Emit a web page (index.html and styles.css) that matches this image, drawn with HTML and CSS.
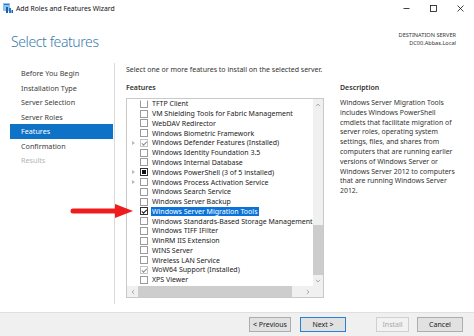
FILE: index.html
```html
<!DOCTYPE html>
<html lang="en">
<head>
    <meta charset="UTF-8">
    <title>Add Roles and Features Wizard</title>
    <link rel="stylesheet" href="styles.css">
</head>
<body>
    <div class="window">
        <div class="titlebar">
            <svg class="app-icon" viewBox="0 0 10 10">
                <rect x="0" y="0" width="7" height="8" fill="#8ec3ee"/>
                <rect x="1" y="1" width="5" height="1" fill="#2b78c5"/>
                <rect x="3" y="4" width="2" height="6" fill="#1b5fa8"/>
                <rect x="6" y="5" width="2" height="5" fill="#2b78c5"/>
                <rect x="8.5" y="7" width="1.5" height="3" fill="#1b5fa8"/>
            </svg>
            <span class="title">Add Roles and Features Wizard</span>
            <div class="controls">
                <span><svg viewBox="0 0 7 7"><line x1="0.5" y1="3.5" x2="6.5" y2="3.5" stroke="#111" stroke-width="0.8"/></svg></span>
                <span><svg viewBox="0 0 7 7"><rect x="0.5" y="0.5" width="6" height="6" fill="none" stroke="#111" stroke-width="0.8"/></svg></span>
                <span><svg viewBox="0 0 7 7"><path d="M0.5 0.5 L6.5 6.5 M6.5 0.5 L0.5 6.5" stroke="#111" stroke-width="0.8"/></svg></span>
            </div>
        </div>

        <div class="header">
            <h1>Select features</h1>
            <div class="dest">
                <div>DESTINATION SERVER</div>
                <div>DC00.Abbas.Local</div>
            </div>
        </div>

        <div class="main">
            <ul class="nav">
                <li>Before You Begin</li>
                <li>Installation Type</li>
                <li>Server Selection</li>
                <li>Server Roles</li>
                <li class="active">Features</li>
                <li>Confirmation</li>
                <li class="disabled">Results</li>
            </ul>

            <div class="content">
                <p class="intro">Select one or more features to install on the selected server.</p>
                <div class="columns">
                    <div class="features">
                        <div class="label">Features</div>
                        <div class="listbox">
                            <div class="rows">
                                <div class="row"><span class="exp"></span><span class="cb cut"></span><span class="name">TFTP Client</span></div>
                                <div class="row"><span class="exp"></span><span class="cb"></span><span class="name">VM Shielding Tools for Fabric Management</span></div>
                                <div class="row"><span class="exp"></span><span class="cb"></span><span class="name">WebDAV Redirector</span></div>
                                <div class="row"><span class="exp"></span><span class="cb"></span><span class="name">Windows Biometric Framework</span></div>
                                <div class="row"><span class="exp on"></span><span class="cb installed"></span><span class="name">Windows Defender Features (Installed)</span></div>
                                <div class="row"><span class="exp"></span><span class="cb"></span><span class="name">Windows Identity Foundation 3.5</span></div>
                                <div class="row"><span class="exp"></span><span class="cb"></span><span class="name">Windows Internal Database</span></div>
                                <div class="row"><span class="exp on"></span><span class="cb partial"></span><span class="name">Windows PowerShell (3 of 5 installed)</span></div>
                                <div class="row"><span class="exp on"></span><span class="cb"></span><span class="name">Windows Process Activation Service</span></div>
                                <div class="row"><span class="exp"></span><span class="cb"></span><span class="name">Windows Search Service</span></div>
                                <div class="row"><span class="exp"></span><span class="cb"></span><span class="name">Windows Server Backup</span></div>
                                <div class="row selected"><span class="exp"></span><span class="cb checked"></span><span class="name">Windows Server Migration Tools</span></div>
                                <div class="row"><span class="exp"></span><span class="cb"></span><span class="name">Windows Standards-Based Storage Management</span></div>
                                <div class="row"><span class="exp"></span><span class="cb"></span><span class="name">Windows TIFF IFilter</span></div>
                                <div class="row"><span class="exp"></span><span class="cb"></span><span class="name">WinRM IIS Extension</span></div>
                                <div class="row"><span class="exp"></span><span class="cb"></span><span class="name">WINS Server</span></div>
                                <div class="row"><span class="exp"></span><span class="cb"></span><span class="name">Wireless LAN Service</span></div>
                                <div class="row"><span class="exp"></span><span class="cb installed"></span><span class="name">WoW64 Support (Installed)</span></div>
                                <div class="row"><span class="exp"></span><span class="cb"></span><span class="name">XPS Viewer</span></div>
                            </div>
                            <div class="vscroll">
                                <span class="sb-btn"><svg viewBox="0 0 6 4"><polyline points="1,3.2 3,1 5,3.2" fill="none" stroke="#9a9a9a" stroke-width="0.8"/></svg></span>
                                <div class="vtrack"><div class="vthumb"></div></div>
                                <span class="sb-btn"><svg viewBox="0 0 6 4"><polyline points="1,0.8 3,3 5,0.8" fill="none" stroke="#9a9a9a" stroke-width="0.8"/></svg></span>
                            </div>
                            <div class="hscroll">
                                <span class="sb-btn"><svg viewBox="0 0 4 6"><polyline points="3.2,1 1,3 3.2,5" fill="none" stroke="#9a9a9a" stroke-width="0.8"/></svg></span>
                                <div class="hthumb"></div>
                                <span class="sb-btn right"><svg viewBox="0 0 4 6"><polyline points="0.8,1 3,3 0.8,5" fill="none" stroke="#9a9a9a" stroke-width="0.8"/></svg></span>
                            </div>
                            <div class="corner"></div>
                        </div>
                    </div>
                    <div class="desc">
                        <div class="label">Description</div>
                        <p>Windows Server Migration Tools includes Windows PowerShell cmdlets that facilitate migration of server roles, operating system settings, files, and shares from computers that are running earlier versions of Windows Server or Windows Server 2012 to computers that are running Windows Server 2012.</p>
                    </div>
                </div>
            </div>
        </div>

        <div class="footer">
            <button class="btn prev">&lt; Previous</button>
            <button class="btn next">Next &gt;</button>
            <button class="btn install" disabled>Install</button>
            <button class="btn cancel">Cancel</button>
        </div>

        <!-- callout arrow pointing at the selected feature -->
        <svg class="callout" viewBox="0 0 64 16">
            <line x1="3" y1="8" x2="48" y2="8" stroke="#ee1c1c" stroke-width="5" stroke-linecap="round"/>
            <polygon points="45,1 63,8 45,15" fill="#ee1c1c"/>
        </svg>
    </div>
</body>
</html>
```

FILE: styles.css
```css
body {
    margin: 0;
    font-family: "Noto Sans", "Open Sans", sans-serif;
    font-size: 7px;
    color: #222;
    background: #fff;
}
.window {
    position: relative;
    width: 474px;
    height: 336px;
    display: flex;
    flex-direction: column;
    background: #fff;
    overflow: hidden;
}

/* title bar */
.titlebar {
    height: 16px;
    display: flex;
    align-items: center;
    padding-left: 3px;
    flex-shrink: 0;
}
.app-icon {
    width: 10px;
    height: 10px;
    margin-right: 3px;
}
.title {
    font-size: 6.8px;
    color: #111;
}
.controls {
    margin-left: auto;
    display: flex;
}
.controls span {
    width: 27px;
    height: 16px;
    display: flex;
    align-items: center;
    justify-content: center;
}
.controls svg {
    width: 7px;
    height: 7px;
}

/* header */
.header {
    height: 45px;
    display: flex;
    justify-content: space-between;
    padding: 0 18px 0 11px;
    flex-shrink: 0;
}
.header h1 {
    margin: 17px 0 0;
    font-size: 14px;
    line-height: 18px;
    font-weight: 300;
    letter-spacing: -0.4px;
    color: #3a7dab;
}
.dest {
    margin-top: 15px;
    text-align: right;
    font-size: 5.6px;
    line-height: 8px;
    color: #333;
}

/* main */
.main {
    flex: 1;
    display: flex;
}
.nav {
    list-style: none;
    width: 116px;
    box-sizing: border-box;
    margin: 2px 0 8px;
    padding: 3px 1px 0 10px;
    border-right: 1px solid #dadada;
    font-size: 7.2px;
    color: #3c3c3c;
}
.nav li {
    height: 14.5px;
    line-height: 14.5px;
    padding-left: 11px;
}
.nav li.active {
    background: #0e72c6;
    color: #fff;
}
.nav li.disabled {
    color: #b4b4b4;
}
.content {
    flex: 1;
    padding: 0 12px 0 11px;
}
.intro {
    margin: 4px 0 0;
    line-height: 10px;
    color: #333;
}
.columns {
    display: grid;
    grid-template-columns: 198px 1fr;
    column-gap: 16px;
    margin-top: 8px;
}
.label {
    font-weight: 600;
    line-height: 10px;
    margin-bottom: 5px;
    color: #333;
}

/* features list */
.listbox {
    height: 200px;
    box-sizing: border-box;
    border: 1px solid #c9c9c9;
    display: grid;
    grid-template-columns: 1fr 10px;
    grid-template-rows: 1fr 11px;
}
.rows {
    overflow: hidden;
}
.row {
    height: 9.78px;
    display: flex;
    align-items: center;
    padding-left: 4px;
    white-space: nowrap;
    color: #222;
}
.exp {
    width: 9px;
    height: 6px;
    display: flex;
    align-items: center;
    flex-shrink: 0;
}
.exp.on::before {
    content: "";
    margin-left: 1px;
    border-left: 3px solid #b8b8b8;
    border-top: 2.5px solid transparent;
    border-bottom: 2.5px solid transparent;
}
.cb {
    width: 8px;
    height: 8px;
    box-sizing: border-box;
    border: 1px solid #9a9a9a;
    background: #fff;
    margin-right: 4px;
    display: flex;
    align-items: center;
    justify-content: center;
    flex-shrink: 0;
}
.cb.cut {
    border-top-color: transparent;
}
.cb.checked {
    border-color: #333;
}
.cb.checked::after,
.cb.installed::after {
    content: "";
    width: 1.6px;
    height: 3.6px;
    border: solid #111;
    border-width: 0 1px 1px 0;
    transform: translate(0, -0.6px) rotate(45deg);
}
.cb.installed {
    border-color: #c4c4c4;
}
.cb.installed::after {
    border-color: #8a8a8a;
}
.cb.partial {
    border-color: #333;
}
.cb.partial::after {
    content: "";
    width: 4px;
    height: 4px;
    background: #111;
}
.row.selected .name {
    background: #0a74d8;
    color: #fff;
    line-height: 9px;
    padding: 0 1px;
    margin-left: -1px;
}

/* scroll bars */
.vscroll {
    display: flex;
    flex-direction: column;
    background: #f0f0f0;
}
.sb-btn {
    height: 11px;
    width: 10px;
    display: flex;
    align-items: center;
    justify-content: center;
    flex-shrink: 0;
}
.sb-btn svg {
    width: 6px;
    height: 4px;
}
.hscroll .sb-btn svg {
    width: 4px;
    height: 6px;
}
.vtrack {
    flex: 1;
    display: flex;
    flex-direction: column;
    justify-content: flex-end;
}
.vthumb {
    height: 50px;
    background: #cdcdcd;
}
.hscroll {
    display: flex;
    background: #f0f0f0;
}
.hscroll .sb-btn {
    width: 11px;
}
.hthumb {
    width: 154px;
    background: #cdcdcd;
}
.hscroll .right {
    margin-left: auto;
}
.corner {
    background: #f0f0f0;
}

/* description */
.desc p {
    margin: 0;
    width: 122px;
    line-height: 9.8px;
    font-size: 6.9px;
    color: #333;
}

/* footer buttons */
.footer {
    height: 24px;
    box-sizing: border-box;
    flex-shrink: 0;
    display: flex;
    align-items: center;
    justify-content: flex-end;
    padding-right: 11px;
    background: #f0f0f0;
    border-top: 1px solid #e0e0e0;
}
.btn {
    height: 15px;
    padding: 0;
    font-family: inherit;
    font-size: 7px;
    color: #222;
    background: #e1e1e1;
    border: 1px solid #adadad;
}
.prev {
    width: 42px;
    margin-right: 9px;
}
.next {
    width: 46px;
    margin-right: 30px;
    border-color: #2a7fd4;
}
.install {
    width: 33px;
    margin-right: 8px;
    color: #a8a8a8;
    background: #f2f2f2;
    border-color: #d0d0d0;
}
.cancel {
    width: 46px;
}

.callout {
    position: absolute;
    left: 70px;
    top: 203px;
    width: 64px;
    height: 16px;
}
```
